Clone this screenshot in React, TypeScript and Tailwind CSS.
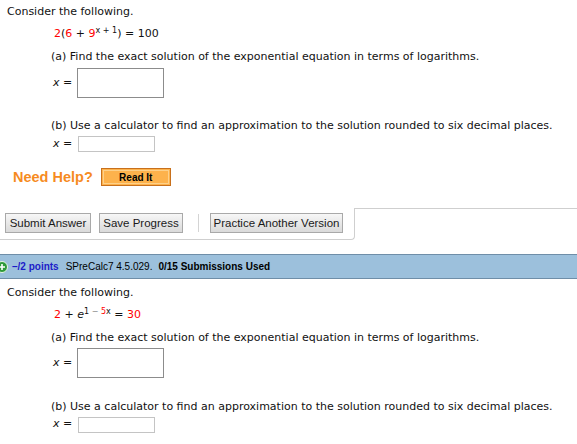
function XEquals({ wide }: { wide?: boolean }) {
  return (
    <div className="flex items-center pl-[2px]">
      <span className="w-[24px]">
        <i>x</i> =
      </span>
      {wide ? (
        <div className="w-[87px] h-[30px] border border-[#8c8c8c] bg-white" />
      ) : (
        <div className="ml-[1px] w-[77px] h-[16px] border border-[#c4c4c4] bg-white" />
      )}
    </div>
  );
}

function Question({ equation, first }: { equation: React.ReactNode; first?: boolean }) {
  return (
    <div className="pl-[7px]">
      <div className="h-[14px] leading-[14px]">Consider the following.</div>
      <div className="ml-[44px]">
        <div className="mt-[8px] h-[14px] leading-[14px] pl-[3px]">{equation}</div>
        <div className="mt-[9px] h-[14px] leading-[14px]">
          (a) Find the exact solution of the exponential equation in terms of logarithms.
        </div>
        <div className={first ? 'mt-[4px]' : 'mt-[3px]'}>
          <XEquals wide />
        </div>
        <div className={first ? 'mt-[21px] h-[14px] leading-[14px]' : 'mt-[22px] h-[14px] leading-[14px]'}>
          (b) Use a calculator to find an approximation to the solution rounded to six decimal places.
        </div>
        <div className={first ? 'mt-[3px]' : 'mt-[2px]'}>
          <XEquals />
        </div>
      </div>
    </div>
  );
}

function GrayButton({ label, w }: { label: string; w: string }) {
  return (
    <button
      className={`${w} h-[20px] border border-[#a9a9a9] bg-gradient-to-b from-[#f7f7f7] to-[#dadada] text-[11.5px] text-[#1a1a1a] leading-none`}
      style={{ fontFamily: '"Liberation Sans", Arial, sans-serif' }}
    >
      {label}
    </button>
  );
}

export default function App() {
  const eq1 = (
    <span>
      <span className="text-[#ff0000]">2</span>(<span className="text-[#ff0000]">6</span> +{' '}
      <span className="text-[#ff0000]">9</span>
      <sup className="text-[8px]">x + 1</sup>) = 100
    </span>
  );
  const eq2 = (
    <span>
      <span className="text-[#ff0000]">2</span> + <i>e</i>
      <sup className="text-[8px]">
        1 <span className="text-[#888]">−</span> <span className="text-[#ff0000]">5</span>x
      </sup>{' '}
      = <span className="text-[#ff0000]">30</span>
    </span>
  );

  return (
    <div
      className="w-[577px] h-[444px] overflow-hidden bg-white text-[11px] text-[#111]"
      style={{ fontFamily: '"DejaVu Sans", Verdana, sans-serif' }}
    >
      <div className="pt-[5px]">
        <Question equation={eq1} first />
      </div>

      {/* Need help */}
      <div className="mt-[14px] flex items-center pl-[13px]" style={{ fontFamily: '"Liberation Sans", Arial, sans-serif' }}>
        <span className="text-[14.5px] font-bold text-[#f68b1f]">Need Help?</span>
        <div className="ml-[8px] w-[70px] h-[18px] border border-[#c8701c] bg-[#fdb24c] p-[1px]">
          <div className="h-full border border-[#fdd08a] flex items-center justify-center text-[10px] font-bold text-black">
            Read It
          </div>
        </div>
      </div>

      {/* Action buttons */}
      <div className="mt-[20px] flex">
        <div className="w-[355px] h-[32px] border-b border-r border-[#cfcfcf] rounded-br-[4px] flex items-center pl-[5px] pb-[1px]">
          <GrayButton label="Submit Answer" w="w-[86px]" />
          <div className="ml-[8px]">
            <GrayButton label="Save Progress" w="w-[84px]" />
          </div>
          <div className="ml-[15px] w-px h-[18px] bg-[#d4d4d4]" />
          <div className="ml-[11px]">
            <GrayButton label="Practice Another Version" w="w-[133px]" />
          </div>
        </div>
        <div className="flex-1 border-t border-[#cfcfcf]" />
      </div>

      {/* Header bar */}
      <div
        className="mt-[14px] h-[25px] border-y border-[#6f8ea8] bg-[#9cc0dc] flex items-center text-[10px] text-black"
        style={{ fontFamily: '"Liberation Sans", Arial, sans-serif' }}
      >
        <svg width="8" height="12" viewBox="0 0 8 12" className="shrink-0">
          <circle cx="2" cy="6" r="5.5" fill="#2f9a3a" stroke="#e8f4e8" strokeWidth="1" />
          <path d="M-1 6h6M2 3v6" stroke="#fff" strokeWidth="1.6" />
        </svg>
        <span className="ml-[4px] font-bold text-[#1c1cc8]">–/2 points</span>
        <span className="ml-[7px]">SPreCalc7 4.5.029.</span>
        <span className="ml-[6px] font-bold">0/15 Submissions Used</span>
      </div>

      <div className="pt-[7px]">
        <Question equation={eq2} />
      </div>
    </div>
  );
}
